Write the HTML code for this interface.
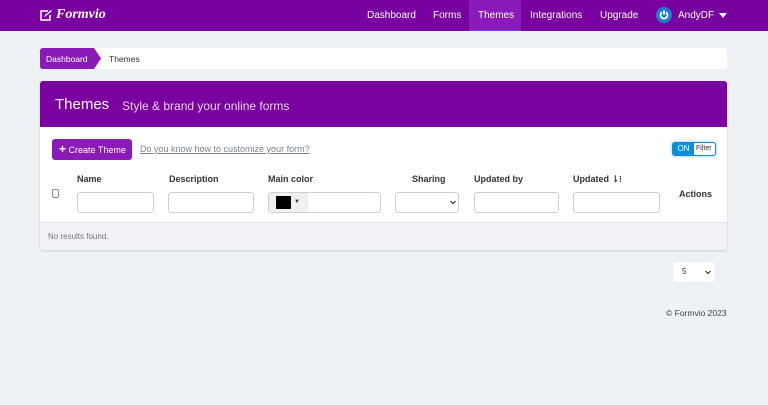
<!DOCTYPE html>
<html><head><meta charset="utf-8"><style>
*{box-sizing:border-box;margin:0;padding:0}
body{width:768px;height:405px;background:#eef1f6;font-family:"Liberation Sans",Arial,sans-serif;position:relative;overflow:hidden;color:#333}
.nav{position:absolute;left:0;top:0;width:768px;height:31px;background:#78009e}
.abs{position:absolute;white-space:nowrap}
.nl{color:#fff;font-size:10px;top:10px}
.act{position:absolute;left:469px;top:0;width:52px;height:31px;background:#8a1bb8;border-bottom:1px solid #5a4cff}
.bc{position:absolute;left:40px;top:48px;width:687px;height:21px;background:#fff;border-radius:3px}
.card{position:absolute;left:40px;top:81px;width:687px;height:169px;background:#fff;border-radius:3px;box-shadow:0 1px 2px rgba(0,0,0,.15);overflow:hidden}
.hd{position:absolute;left:0;top:0;width:687px;height:46px;background:#7a00a0}
.ft{position:absolute;left:0;top:141px;width:687px;height:28px;background:#f0f2f6;border-top:1px solid #e3e6ea}
.inp{position:absolute;top:111px;height:21px;border:1px solid #ccd0d6;border-radius:3px;background:#fff}
.th{position:absolute;top:93px;font-size:9px;font-weight:bold;color:#333}
</style></head><body>
<div class="nav"></div>
<div class="act"></div>
<svg class="abs" style="left:39px;top:9px" width="14" height="13" viewBox="0 0 14 13"><path d="M9 2H2v9h9V6" fill="none" stroke="#fff" stroke-width="1.5"/><path d="M5 8l1-2 6-5 1 1-6 5z" fill="#fff"/></svg>
<div class="abs" style="left:56px;top:7px;color:#fff;font-size:14px;font-weight:bold;font-style:italic;font-family:'Liberation Serif',serif">Formvio</div>
<div class="abs nl" style="left:367px">Dashboard</div>
<div class="abs nl" style="left:433px">Forms</div>
<div class="abs nl" style="left:478px">Themes</div>
<div class="abs nl" style="left:530px">Integrations</div>
<div class="abs nl" style="left:600px">Upgrade</div>
<div class="abs" style="left:656px;top:7px;width:16px;height:16px;border-radius:50%;background:#1a7fd0"></div>
<svg class="abs" style="left:658px;top:9px" width="12" height="12" viewBox="0 0 12 12"><path d="M4 3.2A3.5 3.5 0 1 0 8 3.2" fill="none" stroke="#fff" stroke-width="1.8"/><path d="M6 1.5v4" stroke="#fff" stroke-width="1.8"/></svg>
<div class="abs nl" style="left:678px">AndyDF</div>
<div class="abs" style="left:719px;top:13px;width:0;height:0;border-left:4px solid transparent;border-right:4px solid transparent;border-top:5px solid #fff"></div>

<div class="bc"></div>
<svg class="abs" style="left:40px;top:48px" width="62" height="21"><path d="M3 0H54L61 10.5 54 21H3Q0 21 0 18V3Q0 0 3 0z" fill="#8a1bb8"/></svg>
<div class="abs" style="left:46px;top:54px;color:#fff;font-size:8.5px">Dashboard</div>
<div class="abs" style="left:109px;top:54px;color:#333;font-size:8.5px">Themes</div>

<div class="card">
<div class="hd"></div>
<div class="abs" style="left:15px;top:15px;color:#fff;font-size:15px">Themes</div>
<div class="abs" style="left:82px;top:18px;color:#e6d3ee;font-size:12px">Style &amp; brand your online forms</div>
<div class="abs" style="left:12px;top:58px;width:80px;height:21px;background:#8a1bb8;border-radius:3px;color:#fff;font-size:9px;line-height:21px;padding-left:7px"><b style="font-size:12px">+</b> Create Theme</div>
<div class="abs" style="left:100px;top:63px;color:#7a8594;font-size:9px;text-decoration:underline">Do you know how to customize your form?</div>
<div class="abs" style="left:632px;top:61px;width:44px;height:14px;border:1px solid #0b8fd8;border-radius:3px;background:#fff;box-shadow:0 0 3px #7cc4f0"></div>
<div class="abs" style="left:633px;top:62px;width:21px;height:12px;background:#0b8fd8;color:#fff;font-size:8px;line-height:12px;text-align:center">ON</div>
<div class="abs" style="left:656px;top:64px;font-size:7px;color:#333">Filter</div>
<div class="abs" style="left:12px;top:108px;width:7px;height:9px;border:1px solid #888;border-radius:2px"></div>
<div class="th" style="left:37px">Name</div>
<div class="th" style="left:129px">Description</div>
<div class="th" style="left:228px">Main color</div>
<div class="th" style="left:372px">Sharing</div>
<div class="th" style="left:434px">Updated by</div>
<div class="th" style="left:533px">Updated ⇂⁝</div>
<div class="th" style="left:639px;top:108px">Actions</div>
<div class="inp" style="left:37px;width:77px"></div>
<div class="inp" style="left:128px;width:86px"></div>
<div class="inp" style="left:228px;width:113px"></div>
<div class="abs" style="left:229px;top:112px;width:39px;height:19px;background:#eef0f2"></div>
<div class="abs" style="left:236px;top:115px;width:15px;height:13px;background:#000"></div>
<div class="abs" style="left:254px;top:118px;font-size:6px">▼</div>
<div class="inp" style="left:355px;width:64px"></div>
<svg class="abs" style="left:410px;top:119px" width="6" height="5"><path d="M0.5 1L3 3.5 5.5 1" fill="none" stroke="#333" stroke-width="1.2"/></svg>
<div class="inp" style="left:434px;width:85px"></div>
<div class="inp" style="left:533px;width:87px"></div>
<div class="ft"></div>
<div class="abs" style="left:8px;top:151px;font-size:8px;color:#777">No results found.</div>
</div>

<div class="abs" style="left:673px;top:262px;width:42px;height:20px;background:#fff;border-radius:3px"></div>
<div class="abs" style="left:682px;top:267px;font-size:8px">5</div>
<svg class="abs" style="left:705px;top:270px" width="6" height="5"><path d="M0.5 1L3 3.5 5.5 1" fill="none" stroke="#333" stroke-width="1.2"/></svg>
<div class="abs" style="left:666px;top:308px;font-size:8.5px;color:#444">© Formvio 2023</div>
</body></html>
